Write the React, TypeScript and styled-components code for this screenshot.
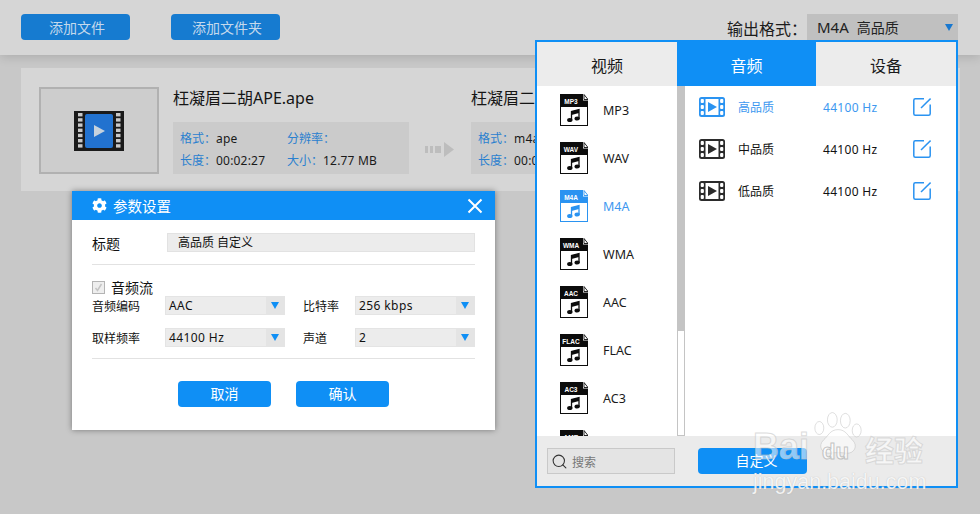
import React from "react";
import styled, { createGlobalStyle } from "styled-components";
import { FaCog } from "react-icons/fa";
import { Search } from "lucide-react";

const FONT = `"Noto Sans", "Noto Sans CJK SC", sans-serif`;
const BLUE = "#0f8ff5";

const Global = createGlobalStyle`
  html, body { margin: 0; padding: 0; background: #c8c8c8; overflow: hidden; }
  * { box-sizing: border-box; }
  body { font-family: ${FONT}; color: #111; }
`;

const Page = styled.div`
  position: relative;
  width: 980px;
  height: 514px;
  overflow: hidden;
  background: #c8c8c8;
`;
const Toolbar = styled.header`
  height: 55px;
  background: #d6d6d6;
  box-shadow: 0 2px 10px rgba(0, 0, 0, 0.14);
  display: flex;
  align-items: flex-start;
  padding: 14px 22px 0 21px;
  gap: 41px;
`;
const ToolButton = styled.button`
  width: 109px;
  height: 26px;
  border: 0;
  border-radius: 4px;
  background: #167bd0;
  color: #c4d9ec;
  font: 14px/26px ${FONT};
  padding: 1px 0 0 3px;
`;
const OutputGroup = styled.div`
  margin-left: auto;
  display: flex;
  align-items: center;
  height: 26px;
`;
const OutputLabel = styled.span`
  font-size: 16px;
  line-height: 26px;
  width: 80px;
  color: #1c1c1c;
  position: relative;
  top: 2px;
`;
const OutputSelect = styled.div`
  width: 151px;
  height: 26px;
  background: #c0c0c0;
  display: flex;
  align-items: center;
  justify-content: space-between;
  padding: 0 5px 0 10px;
  font-size: 14px;
  color: #222;
`;
const OutputFormat = styled.span`
  font-size: 15px;
  margin-right: 8px;
`;
const Caret = styled.i<{ $color?: string }>`
  width: 0;
  height: 0;
  border-left: 4px solid transparent;
  border-right: 4px solid transparent;
  border-top: 7px solid ${(p) => p.$color || BLUE};
`;
const Content = styled.main`
  padding: 13px 0 0 21px;
`;
const Card = styled.section`
  height: 123px;
  width: 939px;
  background: #d6d6d6;
  display: flex;
  padding: 19px 0 0 18px;
`;
const Thumb = styled.div`
  width: 120px;
  height: 87px;
  border: 2px solid #b1b1b1;
  background: #cdcdcd;
  display: flex;
  align-items: center;
  justify-content: center;
  margin-right: 14px;
  flex: none;
`;
const FileBlock = styled.div`
  width: 236px;
  flex: none;
`;
const FileName = styled.div`
  font-size: 16px;
  line-height: 22px;
  white-space: nowrap;
  color: #151515;
`;
const InfoBox = styled.div`
  margin-top: 13px;
  height: 52px;
  background: #cbcbcb;
  display: grid;
  grid-template-columns: 107px 1fr;
  align-content: center;
  row-gap: 3px;
  padding: 2px 0 0 7px;
  white-space: nowrap;
  overflow: hidden;
`;
const Info = styled.div`
  font-size: 12px;
  line-height: 19px;
  letter-spacing: 0.2px;
  color: #1a1a1a;
  b { font-weight: 400; color: #2a80cf; letter-spacing: 0; }
`;
const ArrowBox = styled.div`
  width: 62px;
  flex: none;
  padding: 53px 0 0 16px;
`;
const Dialog = styled.div`
  position: absolute;
  left: 72px;
  top: 191px;
  width: 423px;
  height: 239px;
  background: #fff;
  box-shadow: 0 0 6px rgba(0, 0, 0, 0.4);
`;
const DialogHeader = styled.div`
  height: 29px;
  background: ${BLUE};
  display: flex;
  align-items: center;
  gap: 6px;
  padding: 0 12px 0 20px;
  color: #fff;
  font-size: 14.5px;
  svg:last-child { margin-left: auto; }
`;
const DialogBody = styled.div`
  padding: 0 20px;
`;
const TitleRow = styled.div`
  height: 45px;
  display: flex;
  align-items: center;
  border-bottom: 1px solid #e2e2e2;
  font-size: 14px;
  padding-top: 2px;
`;
const TitleLabel = styled.span`
  width: 75px;
`;
const TitleInput = styled.div`
  width: 308px;
  height: 19px;
  margin-top: -2px;
  background: #ececec;
  border: 1px solid #e2e2e2;
  font-size: 12px;
  line-height: 18px;
  padding-left: 10px;
`;
const CheckRow = styled.div`
  display: flex;
  align-items: center;
  gap: 6px;
  height: 18px;
  margin-top: 13px;
  font-size: 14px;
`;
const CheckBox = styled.span`
  width: 13px;
  height: 13px;
  border: 1px solid #b4b4b4;
  background: #eee;
  display: flex;
  align-items: center;
  justify-content: center;
`;
const ParamGrid = styled.div`
  display: grid;
  grid-template-columns: 73px 120px 18px 52px 120px;
  grid-auto-rows: 19px;
  row-gap: 13px;
  align-items: center;
  font-size: 12px;
  padding-bottom: 11px;
  border-bottom: 1px solid #e2e2e2;
`;
const ParamSelect = styled.div`
  height: 19px;
  background: #ececec;
  border: 1px solid #e4e4e4;
  display: flex;
  align-items: center;
  justify-content: space-between;
  font-size: 12px;
  letter-spacing: 0.4px;
  padding: 0 5px 0 3px;
  position: relative;
  &::after {
    content: "";
    position: absolute;
    right: 0;
    top: 0;
    bottom: 0;
    width: 18px;
    background: #e4e4e4;
  }
  i { position: relative; z-index: 1; }
`;
const Spacer = styled.span``;
const DialogActions = styled.div`
  display: flex;
  justify-content: center;
  gap: 25px;
  margin-top: 22px;
`;
const PrimaryButton = styled.button<{ $w?: number; $shift?: number }>`
  width: ${(p) => p.$w || 93}px;
  height: 26px;
  border: 0;
  border-radius: 4px;
  background: ${BLUE};
  color: #fff;
  font: 14px/26px ${FONT};
  padding: 0 0 0 ${(p) => p.$shift || 0}px;
`;
const Panel = styled.div`
  position: absolute;
  left: 535px;
  top: 40px;
  width: 423px;
  height: 448px;
  border: 2px solid ${BLUE};
  background: #fff;
  display: flex;
  flex-direction: column;
`;
const Tabs = styled.div`
  height: 44px;
  display: grid;
  grid-template-columns: 140px 139px 140px;
  flex: none;
`;
const Tab = styled.div<{ $active?: boolean }>`
  background: ${(p) => (p.$active ? BLUE : "#ececec")};
  color: ${(p) => (p.$active ? "#fff" : "#1a1a1a")};
  font-size: 16px;
  display: flex;
  align-items: center;
  justify-content: center;
  padding-top: 2px;
`;
const PanelBody = styled.div`
  flex: 1;
  display: flex;
  min-height: 0;
`;
const FormatList = styled.div`
  width: 140px;
  overflow: hidden;
  padding-top: 8px;
  flex: none;
`;
const FormatItem = styled.div<{ $active?: boolean }>`
  height: 48px;
  display: flex;
  align-items: flex-start;
  padding-left: 23px;
  gap: 15px;
  font-size: 12.5px;
  color: ${(p) => (p.$active ? "#3d98f0" : "#1a1a1a")};
  span { line-height: 33px; }
`;
const ScrollTrack = styled.div`
  width: 8px;
  flex: none;
  border: 1px solid #c4c4c4;
  border-top: 0;
  background: #fff;
`;
const ScrollThumb = styled.div`
  height: 245px;
  margin: 0 -1px;
  background: #c4c4c4;
`;
const Presets = styled.div`
  flex: 1;
`;
const PresetRow = styled.div<{ $active?: boolean }>`
  height: 42px;
  display: grid;
  grid-template-columns: 39px 85px 90px 18px;
  align-items: center;
  padding-left: 14px;
  font-size: 12px;
  color: ${(p) => (p.$active ? "#3d98f0" : "#111")};
  span:last-of-type { letter-spacing: 0.3px; }
`;
const PanelFooter = styled.div`
  height: 50px;
  flex: none;
  background: #ebebeb;
  display: flex;
  align-items: flex-start;
  padding: 12px 0 0 10px;
`;
const SearchBox = styled.div`
  width: 128px;
  height: 26px;
  border: 1px solid #c9c9c9;
  background: #e4e4e4;
  display: flex;
  align-items: center;
  gap: 4px;
  padding: 0 0 0 3px;
  font-size: 12px;
  color: #777;
  margin-right: 23px;
  span { padding-top: 2px; }
`;
const Watermark = styled.div`
  position: absolute;
  left: 750px;
  top: 405px;
  width: 190px;
  height: 88px;
  pointer-events: none;
`;
const WmBai = styled.span`
  position: absolute;
  left: 3px;
  top: 17px;
  font: 700 36px/50px "Liberation Sans", sans-serif;
  color: rgba(255, 255, 255, 0.55);
  -webkit-text-stroke: 1px rgba(190, 190, 190, 0.55);
`;
const WmDu = styled.span`
  position: absolute;
  left: 72px;
  top: 33px;
  font: 700 22px/28px "Liberation Sans", sans-serif;
  color: rgba(255, 255, 255, 0.7);
  -webkit-text-stroke: 1px rgba(170, 170, 170, 0.7);
`;
const WmJy = styled.span`
  position: absolute;
  left: 115px;
  top: 27px;
  font: 700 29px/34px "Noto Sans CJK SC", sans-serif;
  color: rgba(255, 255, 255, 0.6);
  -webkit-text-stroke: 1px rgba(190, 190, 190, 0.5);
`;
const WmUrl = styled.span`
  position: absolute;
  left: 3px;
  top: 65px;
  font: 400 21.5px/24px "Liberation Sans", sans-serif;
  white-space: nowrap;
  color: rgba(255, 255, 255, 0.85);
  text-shadow: 0 0 1px rgba(150, 150, 150, 0.6);
`;

const FilmIcon = ({ color }: { color: string }) => (
  <svg width="26" height="20" viewBox="0 0 26 20">
    <rect width="26" height="20" rx="2.5" fill={color} />
    <rect x="6.5" y="2" width="13" height="16" fill="#fff" />
    {[2, 8, 14].map((y) => (
      <g key={y} fill="#fff">
        <rect x="1.7" y={y} width="3.2" height="4" rx="1" />
        <rect x="21.1" y={y} width="3.2" height="4" rx="1" />
      </g>
    ))}
    <path d="M9 5 L18 10 L9 15 Z" fill={color} />
  </svg>
);

const ThumbFilm = () => (
  <svg width="50" height="40" viewBox="0 0 50 40">
    <rect width="50" height="40" fill="#1a1a1a" />
    {[2, 7.2, 12.4, 17.6, 22.8, 28, 33.2].map((y) => (
      <g key={y} fill="#c9c9c9">
        <rect x="4" y={y} width="4.5" height="3.4" />
        <rect x="42" y={y} width="4.5" height="3.4" />
      </g>
    ))}
    <rect x="11" y="3" width="28" height="34" rx="2" fill="#2272cf" />
    <path d="M20 14 L31 20 L20 26 Z" fill="#c6d2dd" />
  </svg>
);

const EditIcon = () => (
  <svg width="18" height="18" viewBox="0 0 18 18" fill="none" stroke="#2a93f1" strokeWidth="1.5">
    <path d="M11 0.8 H2.3 Q0.8 0.8 0.8 2.3 V15.7 Q0.8 17.2 2.3 17.2 H15.7 Q17.2 17.2 17.2 15.7 V6.5" />
    <path d="M8 10 L17.6 0.6" />
  </svg>
);

const FileIcon = ({ label, color }: { label: string; color: string }) => (
  <svg width="28" height="32" viewBox="0 0 28 32" style={{ flex: "none" }}>
    <rect x="0.5" y="12" width="27" height="19.5" fill="#fff" stroke={color} />
    <path d="M0 0 H23 V6.5 H28 V13 H0 Z" fill={color} />
    <path d="M24 0.5 V5.5 H28 Z" fill="#fff" stroke={color} strokeWidth="0.9" />
    <text
      x="11"
      y="9.6"
      textAnchor="middle"
      fontSize="6.5"
      fontWeight="700"
      fontFamily="Liberation Sans, sans-serif"
      fill="#fff"
    >
      {label}
    </text>
    <path d="M11.5 26 V17.5 L19 15.5 V24.5" fill="none" stroke={color} strokeWidth="1.3" />
    <path d="M11.5 17.5 L19 15.5 V19 L11.5 21 Z" fill={color} />
    <ellipse cx="9.8" cy="26" rx="2.7" ry="2.1" fill={color} />
    <ellipse cx="17.2" cy="24.5" rx="2.7" ry="2.1" fill={color} />
  </svg>
);

const Arrow = () => (
  <svg width="30" height="15" viewBox="0 0 30 15" fill="#bdbdbd">
    <rect x="0" y="4" width="3" height="7" />
    <rect x="5" y="4" width="3" height="7" />
    <rect x="10" y="4" width="6" height="7" />
    <path d="M19 0 L29 7.5 L19 15 Z" />
  </svg>
);

const formats = ["MP3", "WAV", "M4A", "WMA", "AAC", "FLAC", "AC3", "AMR"];
const presets = ["高品质", "中品质", "低品质"];

export default function App() {
  return (
    <Page>
      <Global />
      <Toolbar>
        <ToolButton>添加文件</ToolButton>
        <ToolButton>添加文件夹</ToolButton>
        <OutputGroup>
          <OutputLabel>输出格式：</OutputLabel>
          <OutputSelect>
            <span>
              <OutputFormat>M4A</OutputFormat>高品质
            </span>
            <Caret $color="#1878d0" />
          </OutputSelect>
        </OutputGroup>
      </Toolbar>
      <Content>
        <Card>
          <Thumb>
            <ThumbFilm />
          </Thumb>
          <FileBlock>
            <FileName>枉凝眉二胡APE.ape</FileName>
            <InfoBox>
              <Info><b>格式：</b>ape</Info>
              <Info><b>分辨率：</b></Info>
              <Info><b>长度：</b>00:02:27</Info>
              <Info><b>大小：</b>12.77 MB</Info>
            </InfoBox>
          </FileBlock>
          <ArrowBox>
            <Arrow />
          </ArrowBox>
          <FileBlock>
            <FileName>枉凝眉二胡APE.m4a</FileName>
            <InfoBox>
              <Info><b>格式：</b>m4a</Info>
              <Info><b>分辨率：</b></Info>
              <Info><b>长度：</b>00:02:27</Info>
              <Info><b>大小：</b>4.12 MB</Info>
            </InfoBox>
          </FileBlock>
        </Card>
      </Content>

      <Dialog>
        <DialogHeader>
          <FaCog size={15} />
          <span>参数设置</span>
          <svg width="16" height="16" viewBox="0 0 16 16" stroke="#fff" strokeWidth="2">
            <path d="M1.5 1.5 L14.5 14.5 M14.5 1.5 L1.5 14.5" />
          </svg>
        </DialogHeader>
        <DialogBody>
          <TitleRow>
            <TitleLabel>标题</TitleLabel>
            <TitleInput>高品质 自定义</TitleInput>
          </TitleRow>
          <CheckRow>
            <CheckBox>
              <svg width="9" height="9" viewBox="0 0 9 9" fill="none" stroke="#c4c4c4" strokeWidth="1.5">
                <path d="M1.5 5 L3.5 7.5 L7.5 1" />
              </svg>
            </CheckBox>
            <span>音频流</span>
          </CheckRow>
          <ParamGrid>
            <span>音频编码</span>
            <ParamSelect><span>AAC</span><Caret /></ParamSelect>
            <Spacer />
            <span>比特率</span>
            <ParamSelect><span>256 kbps</span><Caret /></ParamSelect>
            <span>取样频率</span>
            <ParamSelect><span>44100 Hz</span><Caret /></ParamSelect>
            <Spacer />
            <span>声道</span>
            <ParamSelect><span>2</span><Caret /></ParamSelect>
          </ParamGrid>
          <DialogActions>
            <PrimaryButton>取消</PrimaryButton>
            <PrimaryButton>确认</PrimaryButton>
          </DialogActions>
        </DialogBody>
      </Dialog>

      <Panel>
        <Tabs>
          <Tab>视频</Tab>
          <Tab $active>音频</Tab>
          <Tab>设备</Tab>
        </Tabs>
        <PanelBody>
          <FormatList>
            {formats.map((f) => (
              <FormatItem key={f} $active={f === "M4A"}>
                <FileIcon label={f} color={f === "M4A" ? "#2a93f1" : "#0c0c0c"} />
                <span>{f}</span>
              </FormatItem>
            ))}
          </FormatList>
          <ScrollTrack>
            <ScrollThumb />
          </ScrollTrack>
          <Presets>
            {presets.map((p, i) => (
              <PresetRow key={p} $active={i === 0}>
                <FilmIcon color={i === 0 ? "#2a93f1" : "#2b2b2b"} />
                <span>{p}</span>
                <span>44100 Hz</span>
                <EditIcon />
              </PresetRow>
            ))}
          </Presets>
        </PanelBody>
        <PanelFooter>
          <SearchBox>
            <Search size={17} color="#333" strokeWidth={1.5} />
            <span>搜索</span>
          </SearchBox>
          <PrimaryButton $w={109} $shift={8}>自定义</PrimaryButton>
        </PanelFooter>
      </Panel>

      <Watermark>
        <WmBai>Bai</WmBai>
        <svg
          style={{ position: "absolute", left: 62, top: 3 }}
          width="52"
          height="53"
          viewBox="0 0 64 56"
          fill="rgba(255,255,255,.55)"
          stroke="rgba(190,190,190,.6)"
        >
          <ellipse cx="9" cy="20" rx="5.5" ry="8" />
          <ellipse cx="25" cy="10" rx="6" ry="9" />
          <ellipse cx="41" cy="11" rx="6" ry="9" />
          <ellipse cx="55" cy="23" rx="5.5" ry="8" />
          <path d="M32 22 C22 22 20 30 14 35 C7 42 12 52 22 51 C28 50 36 50 42 51 C52 52 57 42 50 35 C44 30 42 22 32 22 Z" />
        </svg>
        <WmDu>du</WmDu>
        <WmJy>经验</WmJy>
        <WmUrl>jingyan.baidu.com</WmUrl>
      </Watermark>
    </Page>
  );
}
